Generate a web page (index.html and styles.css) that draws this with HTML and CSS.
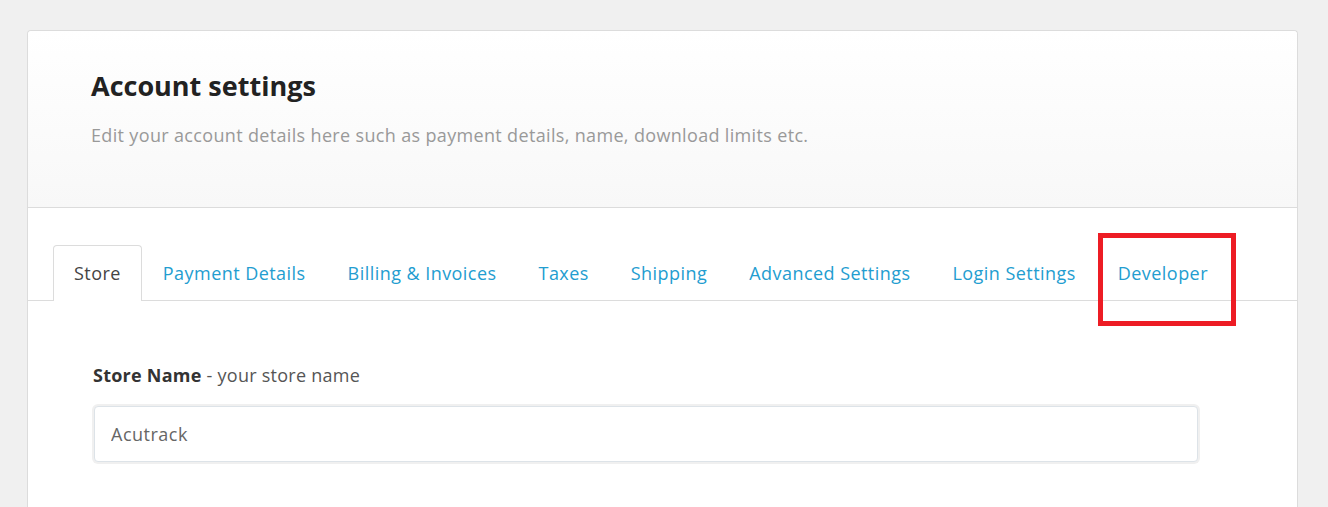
FILE: index.html
```html
<!DOCTYPE html>
<html lang="en">
<head>
    <meta charset="UTF-8">
    <meta name="viewport" content="width=device-width, initial-scale=1.0">
    <title>Account settings</title>
    <link rel="stylesheet" href="styles.css">
</head>
<body>
    <div class="card">
        <div class="card-header">
            <h1>Account settings</h1>
            <p>Edit your account details here such as payment details, name, download limits etc.</p>
        </div>

        <!-- Settings tabs -->
        <ul class="tabs">
            <li class="tab active"><a href="#">Store</a></li>
            <li class="tab"><a href="#">Payment Details</a></li>
            <li class="tab"><a href="#">Billing &amp; Invoices</a></li>
            <li class="tab"><a href="#">Taxes</a></li>
            <li class="tab"><a href="#">Shipping</a></li>
            <li class="tab"><a href="#">Advanced Settings</a></li>
            <li class="tab"><a href="#">Login Settings</a></li>
            <li class="tab highlight"><a href="#">Developer</a></li>
        </ul>

        <form class="tab-body">
            <label for="storeName"><strong>Store Name</strong> - your store name</label>
            <input type="text" id="storeName" value="Acutrack">
        </form>
    </div>
</body>
</html>
```

FILE: styles.css
```css
body {
    margin: 0;
    padding: 30px 30px 0 27px;
    background-color: #f0f0f0;
    font-family: "Open Sans", Arial, sans-serif;
    overflow: hidden;
}
.card {
    background-color: #fff;
    border: 1px solid #dcdcdc;
    border-bottom: none;
    border-radius: 4px 4px 0 0;
    height: 520px;
}
.card-header {
    background: linear-gradient(#fff, #f8f8f8);
    border-bottom: 1px solid #dcdcdc;
    border-radius: 4px 4px 0 0;
    padding: 37px 63px 0;
    height: 139px;
}
.card-header h1 {
    margin: 0;
    font-size: 27px;
    line-height: 36px;
    font-weight: 700;
    color: #222;
}
.card-header p {
    margin: 19px 0 0;
    font-size: 18px;
    letter-spacing: 0.34px;
    color: #999;
}
.tabs {
    list-style: none;
    display: flex;
    margin: 37px 0 0;
    padding: 0 0 0 25px;
    border-bottom: 1px solid #dcdcdc;
}
.tab a {
    display: block;
    padding: 0 20px;
    height: 54px;
    line-height: 54px;
    font-size: 18px;
    letter-spacing: 0.45px;
    color: #239dd0;
    text-decoration: none;
    border: 1px solid transparent;
    border-bottom: none;
    border-radius: 4px 4px 0 0;
    margin-bottom: -1px;
}
.tab.active a {
    color: #444;
    background-color: #fff;
    border-color: #dcdcdc;
    height: 55px;
}
.tab.highlight {
    position: relative;
}
.tab.highlight::after {
    content: "";
    position: absolute;
    left: 1px;
    right: -7px;
    top: -12px;
    bottom: -26px;
    border: 5px solid #ed1c24;
}
.tab-body {
    padding: 62px 65px 0;
}
.tab-body label {
    display: block;
    font-size: 18px;
    letter-spacing: 0.25px;
    color: #555;
    margin-bottom: 19px;
}
.tab-body label strong {
    color: #333;
}
input[type="text"] {
    display: block;
    box-sizing: border-box;
    width: 1104px;
    height: 56px;
    margin-left: 1px;
    padding: 0 16px;
    font-family: inherit;
    font-size: 18px;
    letter-spacing: 0.5px;
    color: #666;
    border: 1px solid #dde3e8;
    border-radius: 4px;
    box-shadow: 0 0 0 2px #f0f0f0;
}
```
